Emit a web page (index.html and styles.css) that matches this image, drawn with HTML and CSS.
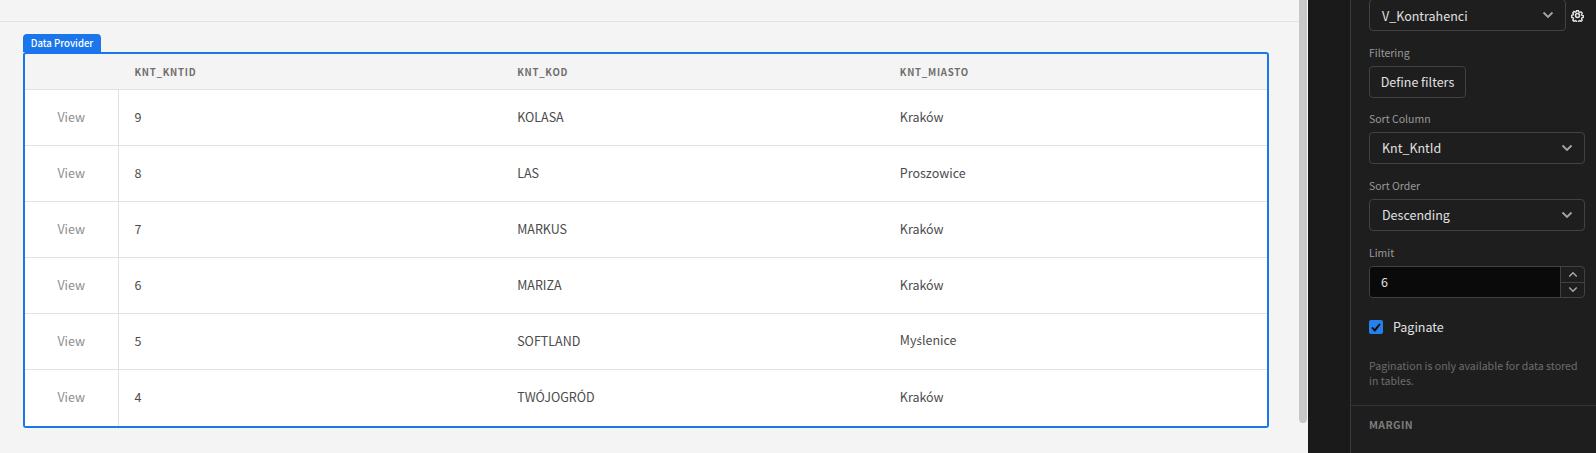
FILE: index.html
```html
<!DOCTYPE html>
<html lang="en">
<head>
  <meta charset="UTF-8" />
  <title>Data Provider</title>
  <link rel="stylesheet" href="styles.css">
</head>
<body>

  <!-- Canvas -->
  <div class="canvas">
    <div class="canvas-scroll">
      <div class="topbar"></div>

      <div class="provider-tab">Data Provider</div>
      <div class="provider">
        <table class="grid">
          <thead>
            <tr>
              <th class="action-col"></th>
              <th>KNT_KNTID</th>
              <th>KNT_KOD</th>
              <th>KNT_MIASTO</th>
            </tr>
          </thead>
          <tbody>
            <tr><td class="action-col">View</td><td>9</td><td>KOLASA</td><td>Kraków</td></tr>
            <tr><td class="action-col">View</td><td>8</td><td>LAS</td><td>Proszowice</td></tr>
            <tr><td class="action-col">View</td><td>7</td><td>MARKUS</td><td>Kraków</td></tr>
            <tr><td class="action-col">View</td><td>6</td><td>MARIZA</td><td>Kraków</td></tr>
            <tr><td class="action-col">View</td><td>5</td><td>SOFTLAND</td><td>My<span class="alt-glyph">ś</span>lenice</td></tr>
            <tr><td class="action-col">View</td><td>4</td><td>TWÓJOGRÓD</td><td>Kraków</td></tr>
          </tbody>
        </table>
      </div>
    </div>
    <div class="scrollbar"><div class="scrollbar-thumb"></div></div>
  </div>

  <!-- Settings -->
  <div class="rail"></div>
  <div class="panel">
    <div class="panel-body">
      <div class="field-row first">
        <div class="select">
          <span>V_Kontrahenci</span>
          <svg class="chevron" viewBox="0 0 12 8"><path d="M1.5 1.5 6 6l4.5-4.5"/></svg>
        </div>
        <svg class="gear" viewBox="0 0 16 16">
          <path d="M6.7 1.5h2.6l.4 1.9 1.3.6 1.7-1 1.8 1.8-1 1.7.5 1.3 1.9.4v2.6l-1.9.4-.5 1.3 1 1.7-1.8 1.8-1.7-1-1.3.5-.4 1.9H6.7l-.4-1.9-1.3-.5-1.7 1-1.8-1.8 1-1.7-.5-1.3-1.9-.4V7.7l1.9-.4.5-1.3-1-1.7 1.8-1.8 1.7 1 1.3-.6z" transform="translate(.8 .8) scale(.9)"/>
          <circle cx="8" cy="8" r="2.4"/>
        </svg>
      </div>

      <label class="field-label">Filtering</label>
      <button class="btn">Define filters</button>

      <label class="field-label">Sort Column</label>
      <div class="select wide">
        <span>Knt_KntId</span>
        <svg class="chevron" viewBox="0 0 12 8"><path d="M1.5 1.5 6 6l4.5-4.5"/></svg>
      </div>

      <label class="field-label">Sort Order</label>
      <div class="select wide">
        <span>Descending</span>
        <svg class="chevron" viewBox="0 0 12 8"><path d="M1.5 1.5 6 6l4.5-4.5"/></svg>
      </div>

      <label class="field-label">Limit</label>
      <div class="stepper">
        <div class="stepper-value">6</div>
        <div class="stepper-btns">
          <div class="step"><svg class="chevron small" viewBox="0 0 12 8"><path d="M1.5 6.5 6 2l4.5 4.5"/></svg></div>
          <div class="step"><svg class="chevron small" viewBox="0 0 12 8"><path d="M1.5 1.5 6 6l4.5-4.5"/></svg></div>
        </div>
      </div>

      <div class="check-row">
        <div class="checkbox"><svg viewBox="0 0 14 14"><path d="M3 7.4 5.8 10.4 11 3.8"/></svg></div>
        <span>Paginate</span>
      </div>

      <p class="help">Pagination is only available for data stored in tables.</p>
    </div>

    <div class="section">MARGIN</div>
  </div>

</body>
</html>
```

FILE: styles.css
```css
html, body {
  margin: 0;
  height: 453px;
  overflow: hidden;
}

body {
  display: flex;
  font-family: "Noto Sans CJK JP", "Noto Sans", sans-serif;
  font-size: 12.5px;
  background: #f4f4f4;
  color: #4b4b4b;
}

/* Canvas side */
.canvas {
  width: 1308px;
  flex: none;
  display: flex;
  background: #f4f4f4;
}

.canvas-scroll {
  width: 1299px;
  flex: none;
}

.topbar {
  height: 21px;
  border-bottom: 1px solid #e1e1e1;
  margin-bottom: 12px;
}

.provider-tab {
  width: 78px;
  height: 18px;
  margin-left: 23px;
  background: #1b76ec;
  color: #fff;
  font-size: 9.6px;
  font-weight: 500;
  line-height: 18px;
  text-align: center;
  border-radius: 4px 4px 0 0;
}

.provider {
  width: 1242px;
  margin-left: 23px;
  border: 2px solid #1b76ec;
  border-radius: 3px;
  background: #f4f4f4;
}

.grid {
  width: 100%;
  table-layout: fixed;
  border-collapse: separate;
  border-spacing: 0;
}

.grid th {
  box-sizing: border-box;
  height: 36px;
  padding: 1px 16px 0 15.5px;
  text-align: left;
  font-size: 9.6px;
  font-weight: 700;
  letter-spacing: .75px;
  color: #6e6e6e;
  line-height: 13px;
  border-bottom: 1px solid #e1e1e1;
}

.grid td {
  box-sizing: border-box;
  height: 56px;
  padding: 0 16px 2px 15.5px;
  background: #fff;
  line-height: 16px;
  border-bottom: 1px solid #e1e1e1;
}

.grid tbody tr:last-child td {
  border-bottom: none;
}

.grid .action-col {
  width: 94px;
  text-align: center;
}

.grid td.action-col {
  color: #8e8e8e;
  border-right: 1px solid #e1e1e1;
}

.alt-glyph {
  font-family: "Noto Sans", sans-serif;
  font-size: 11.4px;
}

.scrollbar {
  width: 8px;
  flex: none;
}

.scrollbar-thumb {
  height: 423px;
  background: #c8c8c8;
  border-radius: 0 0 4px 4px;
}

/* Settings side */
.rail {
  width: 42px;
  flex: none;
  background: #1a1a1a;
}

.panel {
  flex: 1;
  background: #1e1e1e;
  border-left: 1px solid #3a3a3a;
  color: #e0e0e0;
}

.panel-body {
  padding: 0 11px 0 18px;
}

.field-row {
  display: flex;
  align-items: center;
  gap: 5px;
}

.field-row.first {
  margin-top: -1px;
}

.field-row .select {
  width: 197px;
}

.select {
  box-sizing: border-box;
  height: 32px;
  display: flex;
  align-items: center;
  justify-content: space-between;
  padding: 0 11px 0 12px;
  border: 1px solid #424242;
  border-radius: 4px;
  line-height: 15px;
  flex: none;
}

.select.wide span {
  margin-bottom: 2px;
}

.chevron {
  width: 12px;
  height: 8px;
  fill: none;
  stroke: #a6a6a6;
  stroke-width: 1.8;
}

.gear {
  width: 13px;
  height: 13px;
  fill: none;
  stroke: #e4e4e4;
  stroke-width: 1.9;
}

.field-label {
  display: block;
  color: #9a9a9a;
  font-size: 10.5px;
  line-height: 16px;
  margin: 14px 0 5px;
}

.btn {
  box-sizing: border-box;
  display: block;
  width: 97px;
  height: 32px;
  margin-bottom: -1px;
  padding: 0;
  background: transparent;
  color: #e0e0e0;
  border: 1px solid #424242;
  border-radius: 4px;
  font: inherit;
  line-height: 16px;
}

.stepper {
  box-sizing: border-box;
  display: flex;
  height: 32px;
  border: 1px solid #424242;
  border-radius: 4px;
  overflow: hidden;
}

.stepper-value {
  flex: 1;
  background: #0a0a0a;
  padding-left: 11px;
  line-height: 29px;
  border-right: 1px solid #424242;
}

.stepper-btns {
  width: 23px;
  flex: none;
  display: flex;
  flex-direction: column;
}

.step {
  flex: 1;
  display: flex;
  align-items: center;
  justify-content: center;
}

.step + .step {
  border-top: 1px solid #424242;
}

.chevron.small {
  width: 10px;
  height: 7px;
}

.check-row {
  display: flex;
  align-items: center;
  gap: 10px;
  margin-top: 20px;
  line-height: 18px;
}

.checkbox {
  width: 14px;
  height: 14px;
  background: #2680eb;
  border-radius: 2px;
}

.checkbox svg {
  display: block;
  width: 14px;
  height: 14px;
  fill: none;
  stroke: #111;
  stroke-width: 2;
}

.help {
  margin: 22px 0 0;
  color: #6d6d6d;
  font-size: 10.6px;
  line-height: 15px;
}

.section {
  margin-top: 17px;
  padding: 11px 18px 0;
  border-top: 1px solid #333;
  color: #7c7c7c;
  font-size: 10.5px;
  font-weight: 700;
  letter-spacing: .4px;
  line-height: 16px;
}
```
